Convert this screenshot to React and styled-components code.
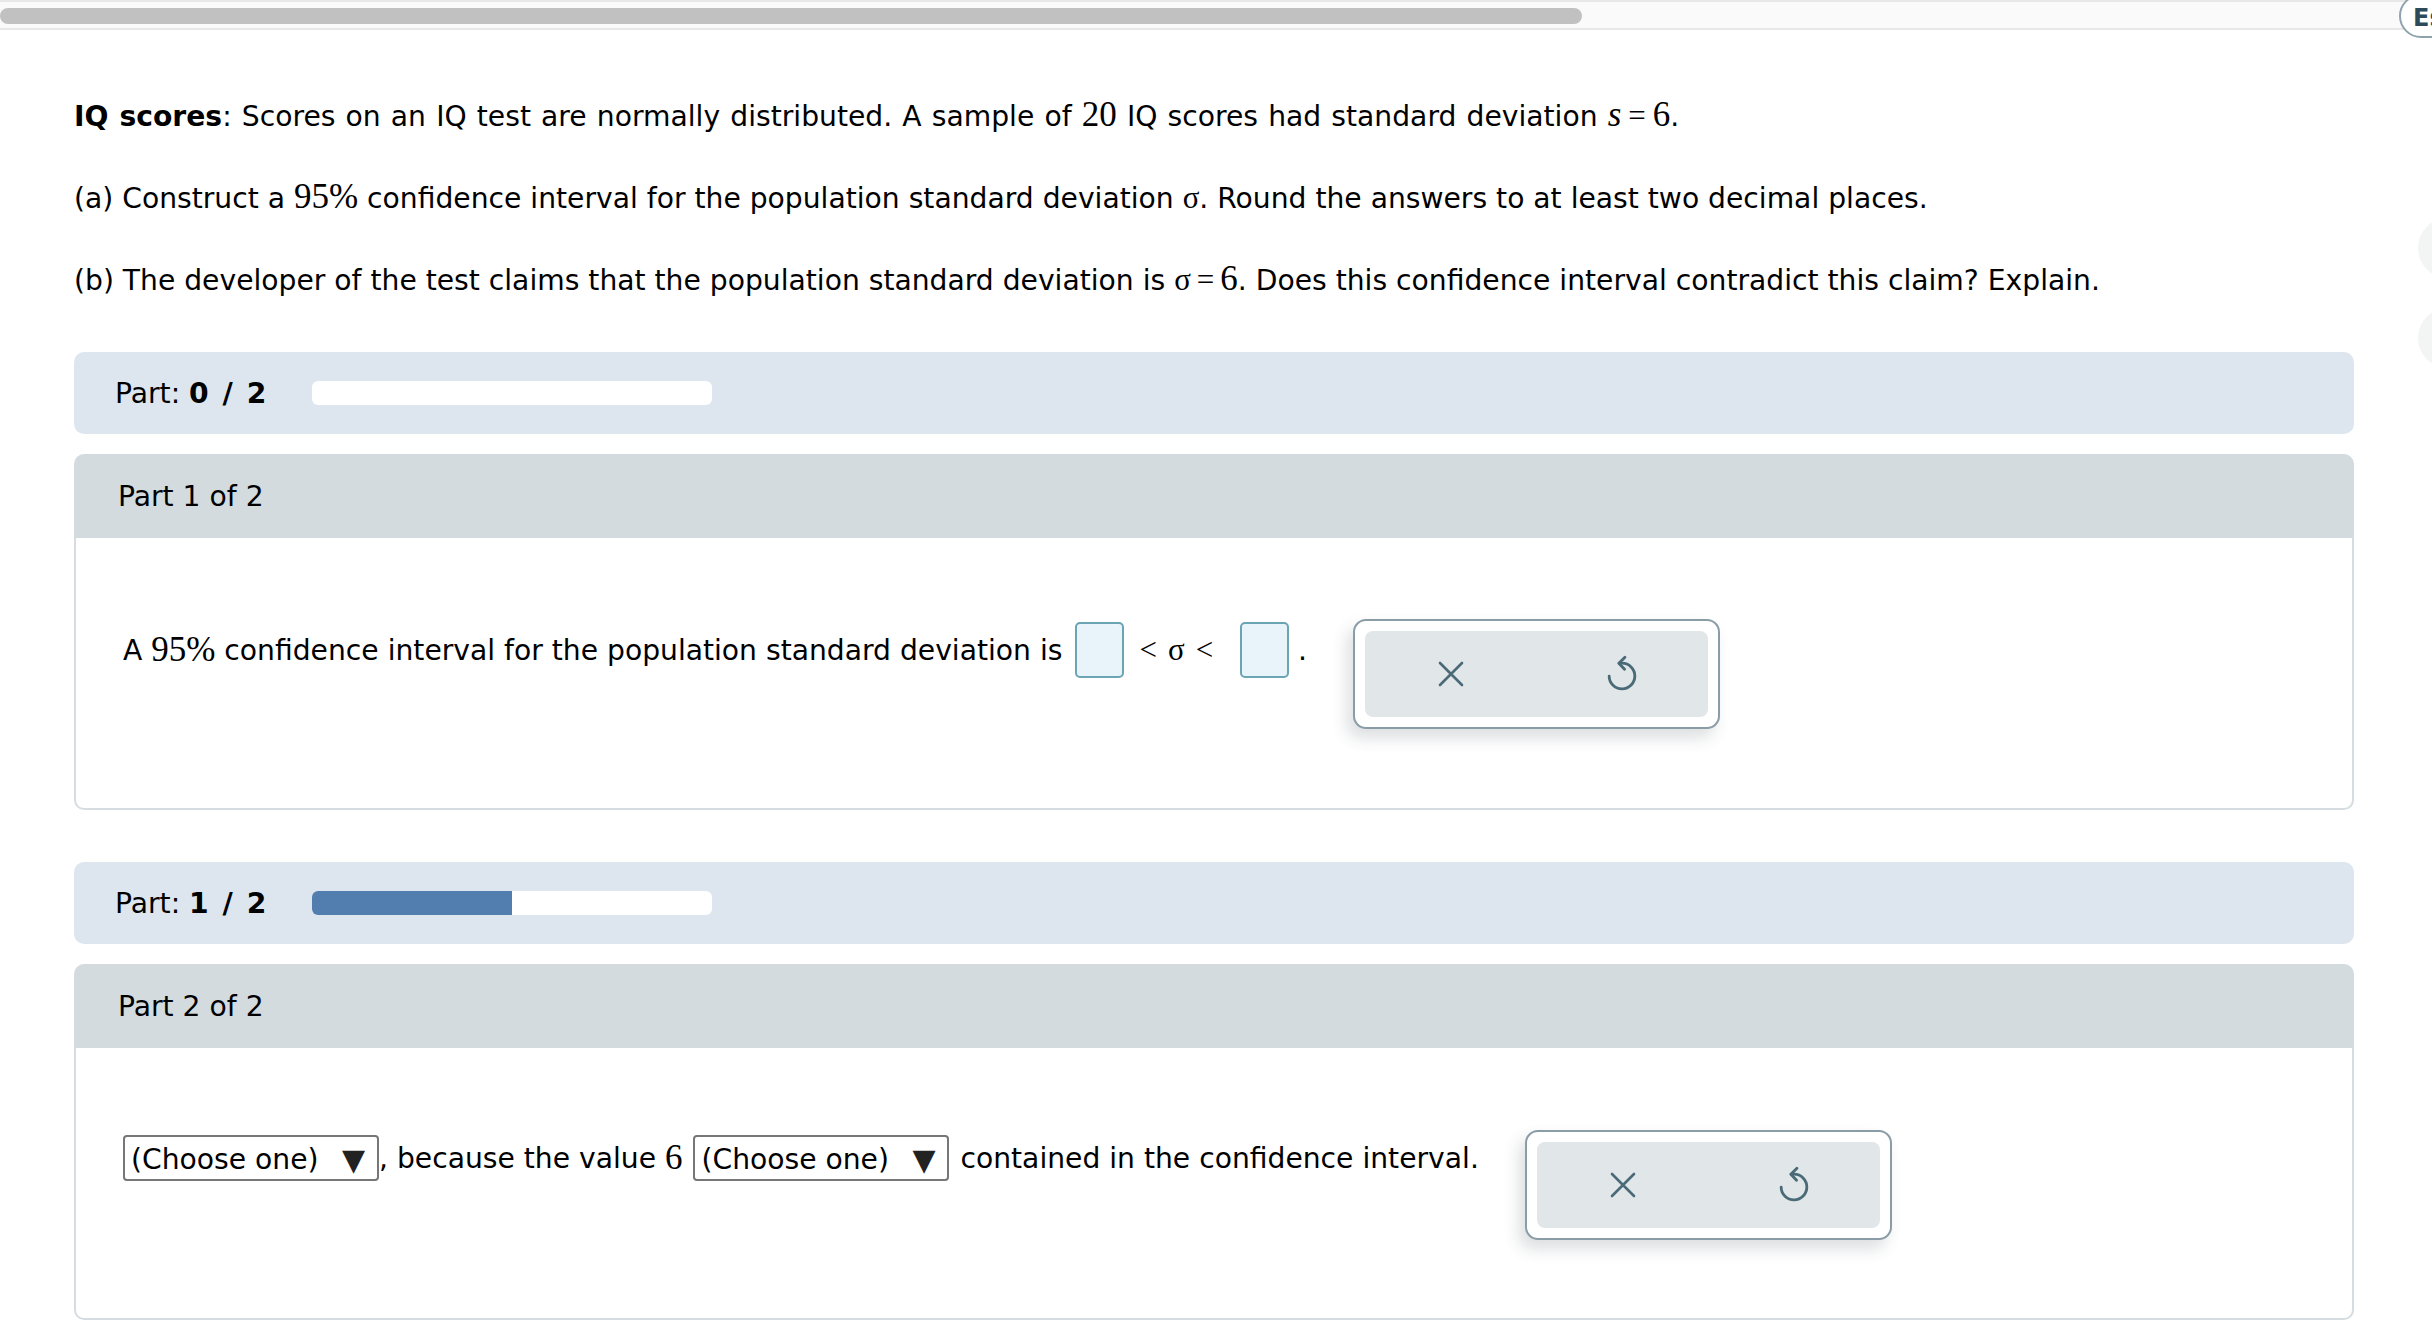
import React from 'react';
import styled, { createGlobalStyle } from 'styled-components';

const GlobalStyle = createGlobalStyle`
  html, body {
    margin: 0;
    padding: 0;
    background: #fff;
    overflow: hidden;
  }
  body {
    font-family: "DejaVu Sans", Verdana, sans-serif;
    font-size: 28.2px;
    color: #000;
  }
`;

const Page = styled.div`
  position: relative;
  width: 100%;
  min-height: 1340px;
  overflow: hidden;
`;

// horizontal scroll strip along the top edge
const ScrollStrip = styled.div`
  height: 26px;
  border-top: 2px solid #e8e8e8;
  border-bottom: 2px solid #e8e8e8;
  background: #fafafa;
  display: flex;
  align-items: flex-start;
`;

const ScrollThumb = styled.div`
  width: 1582px;
  height: 16px;
  margin-top: 6px;
  border-radius: 8px;
  background: #c1c1c1;
`;

const LangButton = styled.button`
  position: absolute;
  left: 2399px;
  top: -6px;
  height: 44px;
  padding: 4px 14px 0 12px;
  border: 2px solid #8fa3ad;
  border-radius: 22px;
  background: #fff;
  color: #2c4a5a;
  font-family: "DejaVu Sans", Verdana, sans-serif;
  font-size: 24px;
  font-weight: 600;
  white-space: nowrap;
`;

const SideDot = styled.div`
  position: absolute;
  left: 2418px;
  top: ${(p) => p.$top}px;
  width: 60px;
  height: 60px;
  border-radius: 50%;
  background: #f3f4f4;
`;

const Content = styled.main`
  padding: 68px 78px 0 74px;
`;

const Prompt = styled.div`
  display: flex;
  flex-direction: column;
  gap: 44px;
  margin-bottom: 52px;
`;

const Para = styled.p`
  margin: 0;
  height: 38px;
  line-height: 38px;
  white-space: nowrap;
  word-spacing: ${(p) => p.$words || 0}px;
`;

// numbers and variables set in the math face
const M = styled.span`
  font-family: "Liberation Serif", "Times New Roman", serif;
  font-size: 35px;
  line-height: 0;
  i {
    font-style: italic;
  }
`;

const Sym = styled.span`
  font-family: "Liberation Serif", "Times New Roman", serif;
  font-size: 31px;
  line-height: 0;
`;

const Rel = styled.span`
  font-family: "Liberation Serif", "Times New Roman", serif;
  font-size: 31px;
  line-height: 0;
  margin: 0 ${(p) => p.$space || 5}px;
`;

const ProgressPanel = styled.div`
  height: 82px;
  display: flex;
  align-items: center;
  padding-left: 41px;
  background: #dde6ef;
  border-radius: 10px;
  margin-bottom: 20px;
`;

const ProgressLabel = styled.span`
  width: 197px;
  white-space: pre;
  b {
    font-weight: 700;
  }
`;

const Slash = styled.span`
  margin: 0 4px;
`;

const Track = styled.div`
  width: 400px;
  height: 24px;
  border-radius: 6px;
  background: #fff;
  overflow: hidden;
`;

const Fill = styled.div`
  height: 100%;
  background: #527daf;
`;

const Card = styled.section`
  margin-bottom: 52px;
`;

const CardHead = styled.div`
  height: 84px;
  display: flex;
  align-items: center;
  padding-left: 44px;
  background: #d3dbdf;
  border-radius: 10px 10px 0 0;
`;

const CardBody = styled.div`
  box-sizing: border-box;
  height: 272px;
  padding: ${(p) => p.$top}px 0 0 47px;
  border: 2px solid #d6dde1;
  border-top: none;
  border-radius: 0 0 10px 10px;
  display: flex;
  align-items: flex-start;
`;

const Sentence = styled.div`
  display: flex;
  align-items: center;
  height: ${(p) => p.$h}px;
  margin-top: ${(p) => p.$offset}px;
  white-space: pre;
`;

const AnswerBox = styled.span`
  box-sizing: border-box;
  width: 49px;
  height: 56px;
  margin: ${(p) => p.$margin};
  border: 2px solid #6ba4b3;
  border-radius: 5px;
  background: #e8f4f9;
`;

const Select = styled.span`
  box-sizing: border-box;
  display: flex;
  align-items: center;
  justify-content: space-between;
  width: 256px;
  height: 46px;
  padding: 4px 12px 0 6px;
  margin: ${(p) => p.$margin};
  border: 2px solid #777;
  border-radius: 4px;
  background: #fff;
  line-height: 1;
`;

const Caret = styled.span`
  font-size: 30px;
  color: #222;
`;

const ToolFrame = styled.div`
  box-sizing: border-box;
  width: 367px;
  height: 110px;
  margin-left: ${(p) => p.$gap}px;
  padding: 10px;
  border: 2px solid #8a9da7;
  border-radius: 13px;
  background: #fff;
  box-shadow: -6px 9px 16px rgba(40, 55, 65, 0.16);
`;

const ToolInner = styled.div`
  display: flex;
  height: 100%;
  border-radius: 8px;
  background: #e1e6e9;
`;

const ToolButton = styled.button`
  flex: 1;
  display: flex;
  align-items: center;
  justify-content: center;
  border: none;
  background: transparent;
  padding: 0;
  color: #4b6a77;
`;

const ClearIcon = () => (
  <svg width="26" height="26" viewBox="0 0 26 26" fill="none" stroke="currentColor" strokeWidth="2.6" strokeLinecap="round">
    <path d="M2 2 L24 24 M24 2 L2 24" />
  </svg>
);

const UndoIcon = () => (
  <svg width="44" height="44" viewBox="0 0 24 24" fill="none" stroke="currentColor" strokeWidth="1.55" strokeLinecap="round" strokeLinejoin="round">
    <path d="M13.6 2.8 L10.3 6.1 L13.4 9.4" />
    <path d="M10.4 6.1 H12 A7 7 0 1 1 5 13.2" />
  </svg>
);

const Tools = ({ gap }) => (
  <ToolFrame $gap={gap}>
    <ToolInner>
      <ToolButton aria-label="Clear"><ClearIcon /></ToolButton>
      <ToolButton aria-label="Undo"><UndoIcon /></ToolButton>
    </ToolInner>
  </ToolFrame>
);

const Progress = ({ done, total }) => (
  <ProgressPanel>
    <ProgressLabel>
      Part: <b>{done} <Slash>/</Slash> {total}</b>
    </ProgressLabel>
    <Track>
      <Fill style={{ width: `${(done / total) * 100}%` }} />
    </Track>
  </ProgressPanel>
);

const Dropdown = ({ margin }) => (
  <Select $margin={margin}>
    <span>(Choose one)</span>
    <Caret>▼</Caret>
  </Select>
);

export default function App() {
  return (
    <Page>
      <GlobalStyle />
      <ScrollStrip>
        <ScrollThumb />
      </ScrollStrip>
      <LangButton>Español</LangButton>
      <SideDot $top={218} />
      <SideDot $top={308} />

      <Content>
        <Prompt>
          <Para $words={1.2}>
            <b>IQ scores</b>: Scores on an IQ test are normally distributed. A sample of <M>20</M> IQ scores had standard deviation{' '}
            <M><i>s</i><Rel $space={7}>=</Rel>6</M>.
          </Para>
          <Para>
            (a) Construct a <M>95%</M> confidence interval for the population standard deviation <Sym>σ</Sym>. Round the answers to at least two decimal places.
          </Para>
          <Para>
            (b) The developer of the test claims that the population standard deviation is <Sym>σ</Sym><Rel $space={6}>=</Rel><M>6</M>. Does this confidence interval contradict this claim? Explain.
          </Para>
        </Prompt>

        <Progress done={0} total={2} />
        <Card>
          <CardHead>Part 1 of 2</CardHead>
          <CardBody $top={81}>
            <Sentence $h={56} $offset={3}>
              A <M>95%</M> confidence interval for the population standard deviation is
              <AnswerBox $margin="0 10px 0 13px" />
              <Rel $space={0}>&lt;</Rel><Rel $space={6}>σ</Rel><Rel $space={0}>&lt;</Rel>
              <AnswerBox $margin="0 9px 0 22px" />
              .
            </Sentence>
            <Tools gap={46} />
          </CardBody>
        </Card>

        <Progress done={1} total={2} />
        <Card>
          <CardHead>Part 2 of 2</CardHead>
          <CardBody $top={82}>
            <Sentence $h={46} $offset={5}>
              <Dropdown margin="0" />
              , because the value <M>6</M>
              <Dropdown margin="0 11px 0 11px" />
              contained in the confidence interval.
            </Sentence>
            <Tools gap={46} />
          </CardBody>
        </Card>
      </Content>
    </Page>
  );
}
